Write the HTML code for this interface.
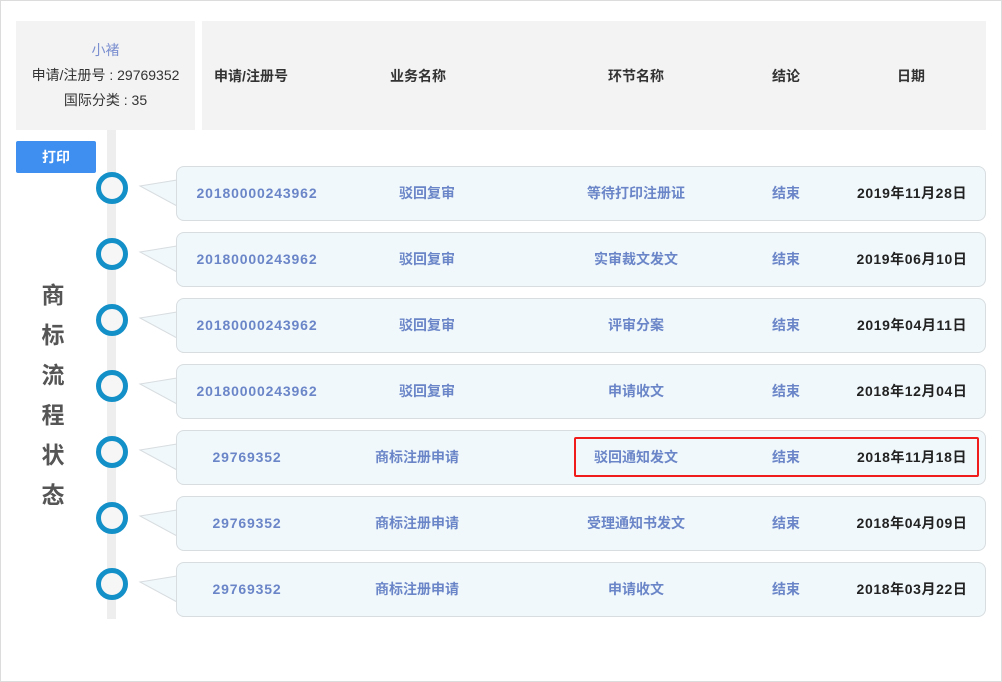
<html><head><style>
body{margin:0;width:1002px;height:682px;overflow:hidden;background:#fff;font-family:"Liberation Sans","Noto Sans CJK SC",sans-serif;}
.frame{position:absolute;left:0;top:0;width:1000px;height:680px;border:1px solid #dcdcdc;}
.a{position:absolute}
.info{left:16px;top:21px;width:179px;height:109px;background:#f3f3f3;text-align:center;font-size:14px;color:#333;line-height:25px;padding-top:17px;box-sizing:border-box}
.hdr{left:202px;top:21px;width:784px;height:109px;background:#f3f3f3;font-size:14px;font-weight:bold;color:#333}
.c{position:absolute;transform:translateX(-50%);white-space:nowrap}
.btn{left:16px;top:141px;width:80px;height:32px;background:#3f8ff0;color:#fff;font-weight:bold;font-size:14px;text-align:center;line-height:32px;border-radius:2px}
.line{left:107px;top:130px;width:9px;height:489px;background:#eeeeee}
.circ{position:absolute;left:96px;width:22px;height:22px;border:5px solid #1490c8;border-radius:50%;background:#f6f6f6}
.card{position:absolute;left:176px;width:808px;height:53px;background:#f0f8fb;border:1px solid #d8dde0;border-radius:8px;font-size:14px;font-weight:bold;color:#6b86c8}
.card span{position:absolute;top:17px;transform:translateX(-50%);white-space:nowrap;line-height:18px;font-weight:bold}
.card .n{letter-spacing:0.85px}
.card .d{color:#222;letter-spacing:0.6px}
.vt{left:38px;top:275px;width:30px;font-size:23px;font-weight:bold;color:#555;line-height:40px;text-align:center}
</style></head><body>
<div class="frame"></div>
<div class="a info"><div style="color:#7b8fd0">小褚</div><div>申请/注册号 : 29769352</div><div>国际分类 : 35</div></div>
<div class="a hdr"><span class="c" style="left:49px;top:45px">申请/注册号</span><span class="c" style="left:216px;top:45px">业务名称</span><span class="c" style="left:434px;top:45px">环节名称</span><span class="c" style="left:584px;top:45px">结论</span><span class="c" style="left:709px;top:45px">日期</span></div>
<div class="a btn">打印</div>
<div class="a line"></div>
<div class="a vt">商标流程状态</div>
<svg class="a" style="left:0;top:0" width="1002" height="682">
<g fill="#f0f8fb" stroke="#d8dde0">
<polygon points="140,186 177,180 177,206"/><polygon points="140,252 177,246 177,272"/><polygon points="140,318 177,312 177,338"/><polygon points="140,384 177,378 177,404"/><polygon points="140,450 177,444 177,470"/><polygon points="140,516 177,510 177,536"/><polygon points="140,582 177,576 177,602"/>
</g></svg>
<div class="circ" style="top:172px"></div><div class="circ" style="top:238px"></div><div class="circ" style="top:304px"></div><div class="circ" style="top:370px"></div><div class="circ" style="top:436px"></div><div class="circ" style="top:502px"></div><div class="circ" style="top:568px"></div>
<div class="card" style="top:166px"><span class="n" style="left:80px">20180000243962</span><span style="left:250px">驳回复审</span><span style="left:459px">等待打印注册证</span><span style="left:609px">结束</span><span class="d" style="left:735px">2019年11月28日</span></div>
<div class="card" style="top:232px"><span class="n" style="left:80px">20180000243962</span><span style="left:250px">驳回复审</span><span style="left:459px">实审裁文发文</span><span style="left:609px">结束</span><span class="d" style="left:735px">2019年06月10日</span></div>
<div class="card" style="top:298px"><span class="n" style="left:80px">20180000243962</span><span style="left:250px">驳回复审</span><span style="left:459px">评审分案</span><span style="left:609px">结束</span><span class="d" style="left:735px">2019年04月11日</span></div>
<div class="card" style="top:364px"><span class="n" style="left:80px">20180000243962</span><span style="left:250px">驳回复审</span><span style="left:459px">申请收文</span><span style="left:609px">结束</span><span class="d" style="left:735px">2018年12月04日</span></div>
<div class="card" style="top:430px"><span class="n" style="left:70px">29769352</span><span style="left:240px">商标注册申请</span><span style="left:459px">驳回通知发文</span><span style="left:609px">结束</span><span class="d" style="left:735px">2018年11月18日</span></div>
<div class="card" style="top:496px"><span class="n" style="left:70px">29769352</span><span style="left:240px">商标注册申请</span><span style="left:459px">受理通知书发文</span><span style="left:609px">结束</span><span class="d" style="left:735px">2018年04月09日</span></div>
<div class="card" style="top:562px"><span class="n" style="left:70px">29769352</span><span style="left:240px">商标注册申请</span><span style="left:459px">申请收文</span><span style="left:609px">结束</span><span class="d" style="left:735px">2018年03月22日</span></div>
<div class="a" style="left:574px;top:437px;width:401px;height:36px;border:2px solid #f01c1c;border-radius:2px"></div>
</body></html>
